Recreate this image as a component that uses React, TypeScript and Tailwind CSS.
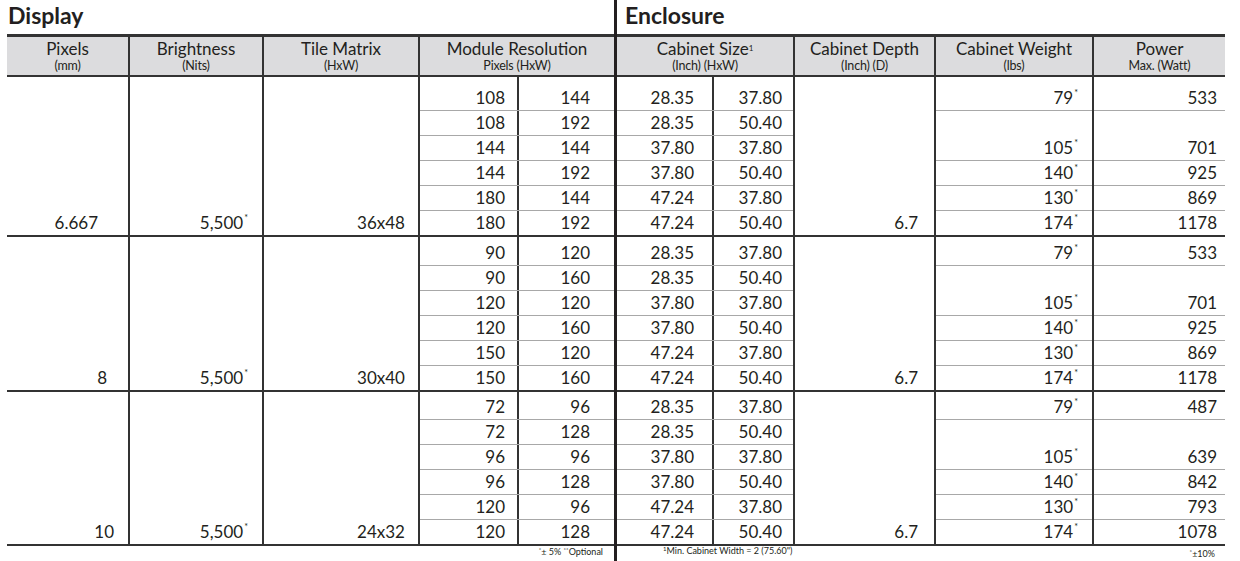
import React from 'react'

const cabinet = [
  ['28.35', '37.80'],
  ['28.35', '50.40'],
  ['37.80', '37.80'],
  ['37.80', '50.40'],
  ['47.24', '37.80'],
  ['47.24', '50.40'],
]

const weights = ['79', '105', '140', '130', '174']
const spans = ['h-[25px]', 'h-[50px]', 'h-[25px]', 'h-[25px]', 'h-[25px]']

const groups = [
  {
    pixels: '6.667',
    pixPad: 'pr-[30px]',
    tile: '36x48',
    pad: 'h-[8px]',
    module: [['108', '144'], ['108', '192'], ['144', '144'], ['144', '192'], ['180', '144'], ['180', '192']],
    power: ['533', '701', '925', '869', '1178'],
  },
  {
    pixels: '8',
    pixPad: 'pr-[21px]',
    tile: '30x40',
    pad: 'h-[3px]',
    module: [['90', '120'], ['90', '160'], ['120', '120'], ['120', '160'], ['150', '120'], ['150', '160']],
    power: ['533', '701', '925', '869', '1178'],
  },
  {
    pixels: '10',
    pixPad: 'pr-[14px]',
    tile: '24x32',
    pad: 'h-[2px]',
    module: [['72', '96'], ['72', '128'], ['96', '96'], ['96', '128'], ['120', '96'], ['120', '128']],
    power: ['487', '639', '842', '793', '1078'],
  },
]

const line = 'border-[#333]'

function Star() {
  return <sup className="text-[9px] ml-[1px]">*</sup>
}

function Head({ title, sub, className = '' }: { title: React.ReactNode; sub: string; className?: string }) {
  return (
    <div className={`flex flex-col items-center pt-[3px] ${className}`}>
      <div className="text-[17px] leading-[17px]">{title}</div>
      <div className="mt-[3px] text-[12.5px] leading-[12px] tracking-[-0.2px]">{sub}</div>
    </div>
  )
}

// merged cell with its value on the last row
function Merged({ value, className }: { value: React.ReactNode; className: string }) {
  return (
    <div className={`flex flex-col justify-end ${className}`}>
      <div className="h-[25px] flex items-center justify-end">{value}</div>
    </div>
  )
}

// two sub-columns, six rows
function Pair({ rows, pad, widths, pads }: { rows: string[][]; pad: string; widths: string[]; pads: string[] }) {
  return (
    <div className="flex flex-col">
      <div className={`flex ${pad}`}>
        <div className={widths[0]} />
        <div className={`${widths[1]} border-l-2 ${line}`} />
      </div>
      {rows.map((r, i) => (
        <div key={i} className={`flex h-[25px] ${i > 0 ? 'border-t border-[#a8a8a8]' : ''}`}>
          <div className={`${widths[0]} flex items-center justify-end ${pads[0]}`}>{r[0]}</div>
          <div className={`${widths[1]} flex items-center justify-end border-l-2 ${line} ${pads[1]}`}>{r[1]}</div>
        </div>
      ))}
    </div>
  )
}

function Stack({ values, pad, className, padR, star }: { values: string[]; pad: string; className: string; padR: string; star?: boolean }) {
  return (
    <div className={`flex flex-col ${className}`}>
      <div className={pad} />
      {values.map((v, i) => (
        <div
          key={i}
          className={`${spans[i]} flex items-end justify-end ${padR} ${i > 0 ? 'border-t border-[#a8a8a8]' : ''}`}
        >
          <div className="h-[25px] flex items-center">
            {v}
            {star && <Star />}
          </div>
        </div>
      ))}
    </div>
  )
}

export default function App() {
  return (
    <div
      className="w-[1240px] h-[561px] flex bg-white text-[#231f20] overflow-hidden"
      style={{ fontFamily: 'Lato, "Open Sans", sans-serif' }}
    >
      {/* Display */}
      <div className="w-[614px] pl-[7px] flex flex-col">
        <div className="h-[34px] pl-[1px] pt-[4px] text-[23px] leading-[22px] font-bold">Display</div>
        <div className={`h-[43px] flex bg-[#dcdcde] border-t-[3px] border-b-2 ${line}`}>
          <Head title="Pixels" sub="(mm)" className="w-[121px]" />
          <Head title="Brightness" sub="(Nits)" className={`w-[134px] border-l-2 ${line}`} />
          <Head title="Tile Matrix" sub="(HxW)" className={`w-[156px] border-l-2 ${line}`} />
          <Head title="Module Resolution" sub="Pixels (HxW)" className={`w-[196px] border-l-2 ${line}`} />
        </div>
        {groups.map((g, gi) => (
          <div key={gi} className={`flex text-[17px] border-b-2 ${line}`}>
            <Merged value={g.pixels} className={`w-[121px] ${g.pixPad}`} />
            <Merged
              value={
                <>
                  5,500
                  <Star />
                </>
              }
              className={`w-[134px] border-l-2 ${line} pr-[14px]`}
            />
            <Merged value={g.tile} className={`w-[156px] border-l-2 ${line} pr-[13px]`} />
            <div className={`border-l-2 ${line}`}>
              <Pair rows={g.module} pad={g.pad} widths={['w-[97px]', 'w-[97px]']} pads={['pr-[12px]', 'pr-[24px]']} />
            </div>
          </div>
        ))}
        <div className="flex-1 flex justify-end pr-[11px] pt-[1px] text-[9px] leading-[10px]">
          <span>
            <sup className="text-[6px]">*</sup>± 5% <sup className="text-[6px]">**</sup>Optional
          </span>
        </div>
      </div>

      <div className="w-[3px] bg-[#231f20]" />

      {/* Enclosure */}
      <div className="w-[608px] flex flex-col">
        <div className="h-[34px] pl-[8px] pt-[4px] text-[23px] leading-[22px] font-bold">Enclosure</div>
        <div className={`h-[43px] flex bg-[#dcdcde] border-t-[3px] border-b-2 ${line}`}>
          <Head
            title={
              <>
                Cabinet Size<sup className="text-[8px]">1</sup>
              </>
            }
            sub="(Inch) (HxW)"
            className="w-[176px]"
          />
          <Head title="Cabinet Depth" sub="(Inch) (D)" className={`w-[141px] border-l-2 ${line}`} />
          <Head title="Cabinet Weight" sub="(lbs)" className={`w-[158px] border-l-2 ${line}`} />
          <Head title="Power" sub="Max. (Watt)" className={`w-[133px] border-l-2 ${line}`} />
        </div>
        {groups.map((g, gi) => (
          <div key={gi} className={`flex text-[17px] border-b-2 ${line}`}>
            <Pair rows={cabinet} pad={g.pad} widths={['w-[95px]', 'w-[81px]']} pads={['pr-[18px]', 'pr-[11px]']} />
            <Merged value="6.7" className={`w-[141px] border-l-2 ${line} pr-[16px]`} />
            <Stack values={weights} pad={g.pad} className={`w-[158px] border-l-2 ${line}`} padR="pr-[14px]" star />
            <Stack values={g.power} pad={g.pad} className={`w-[133px] border-l-2 ${line}`} padR="pr-[8px]" />
          </div>
        ))}
        <div className="flex-1 flex text-[9px] leading-[10px]">
          <span className="pl-[46px]">
            <sup className="text-[6px]">1</sup>Min. Cabinet Width = 2 (75.60")
          </span>
          <span className="ml-auto pr-[10px] pt-[3px]">
            <sup className="text-[6px]">*</sup>±10%
          </span>
        </div>
      </div>
    </div>
  )
}
